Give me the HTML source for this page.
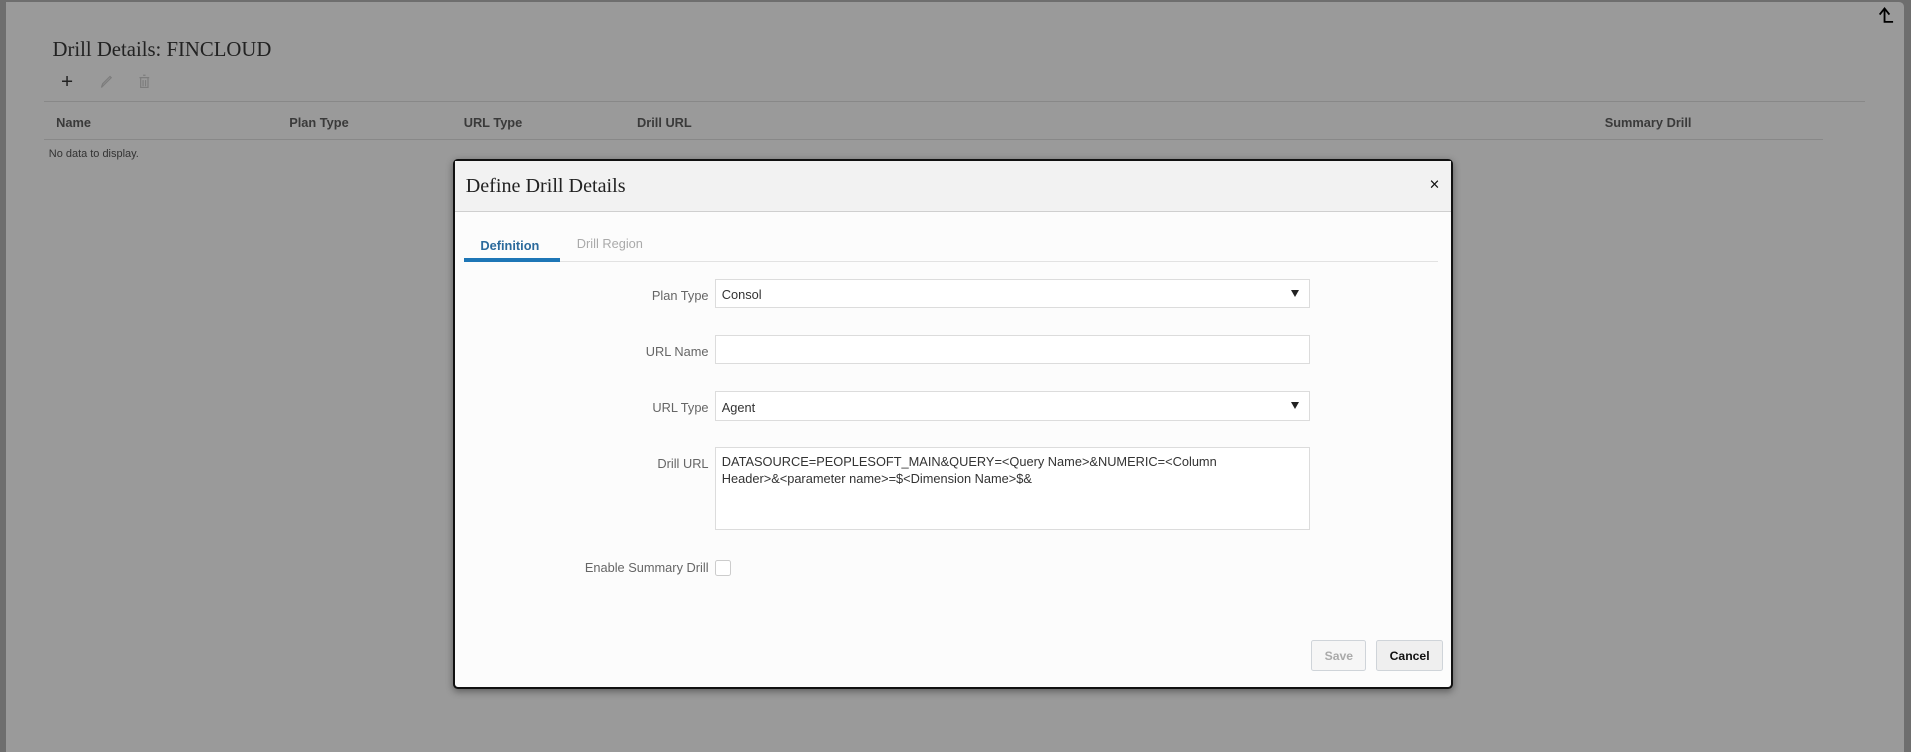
<!DOCTYPE html>
<html><head><meta charset="utf-8"><style>
html,body{margin:0;padding:0;width:1911px;height:752px;overflow:hidden;background:#6e6e6e;}
#w{zoom:1.22031;width:1566px;height:617px;position:relative;font-family:"Liberation Sans",sans-serif;}
.bg{position:absolute;left:5px;top:2px;width:1555px;height:620px;background:#9a9a9a;border-radius:0 4px 0 0;}
.a{position:absolute;white-space:nowrap;}
.hd{font-weight:bold;font-size:10.5px;color:#3a3a3a;top:94px;}
.dlg{position:absolute;left:371px;top:130px;width:816px;height:431px;background:#fcfcfc;border:2px solid #111;border-radius:4px;box-shadow:0 2px 6px rgba(0,0,0,.4);}
.dh{height:41px;background:#f2f2f2;border-bottom:1px solid #cfcfcf;position:relative;}
.lbl{position:absolute;right:608px;font-size:10.5px;color:#666;text-align:right;}
.inp{position:absolute;left:213px;width:488px;height:24px;border:1px solid #dcdcdc;background:#fff;font-size:10.5px;color:#333;box-sizing:border-box;padding:6px 5px;}
.arr{position:absolute;right:8px;top:8px;width:0;height:0;border-left:4px solid transparent;border-right:4px solid transparent;border-top:6px solid #222;}
.btn{position:absolute;top:393px;height:25px;border:1px solid #cfd4d9;border-radius:2px;font-size:10px;font-weight:bold;text-align:center;line-height:25px;box-sizing:border-box;}
</style></head><body><div id="w">
<div class="bg"></div>
<div class="a" style="left:43px;top:32px;font-family:'Liberation Serif',serif;font-size:17px;color:#222;">Drill Details: FINCLOUD</div>
<div class="a" style="left:50px;top:57px;font-size:17px;color:#222;">+</div>
<svg class="a" style="left:81px;top:61px" width="12" height="12"><path d="M2 11 L3 8 L9 2 L10 3 L4 9 Z" fill="none" stroke="#7d7d7d" stroke-width="1"/></svg>
<svg class="a" style="left:112px;top:61px" width="12" height="12"><path d="M2 3h8M5 1h2M3 3v8h6V3M5 5v5M7 5v5" fill="none" stroke="#7d7d7d" stroke-width="1"/></svg>
<div class="a" style="left:36px;top:83px;width:1492px;border-top:1px solid #888;"></div>
<div class="a hd" style="left:46px">Name</div>
<div class="a hd" style="left:237px">Plan Type</div>
<div class="a hd" style="left:380px">URL Type</div>
<div class="a hd" style="left:522px">Drill URL</div>
<div class="a hd" style="left:1315px">Summary Drill</div>
<div class="a" style="left:36px;top:114px;width:1458px;border-top:1px solid #888;"></div>
<div class="a" style="left:40px;top:121px;font-size:9px;color:#333;">No data to display.</div>
<svg class="a" style="left:1537px;top:5px" width="18" height="18"><path d="M3 7 L7 2 L11 7 M7 2 V13 H14" fill="none" stroke="#000" stroke-width="1.5"/></svg>
<div class="dlg">
 <div class="dh"><div class="a" style="left:9px;top:12px;font-family:'Liberation Serif',serif;font-size:16.5px;color:#222;">Define Drill Details</div>
 <div class="a" style="right:9px;top:12px;font-size:14px;color:#111;">×</div></div>
 <div class="a" style="left:8px;top:82px;width:798px;border-top:1px solid #e2e2e2;"></div>
 <div class="a" style="left:8px;top:80px;width:78px;height:3px;background:#1d76b6;"></div>
 <div class="a" style="left:21px;top:63px;font-size:10.5px;font-weight:bold;color:#2b6a9c;">Definition</div>
 <div class="a" style="left:100px;top:62px;font-size:10.5px;color:#aaa;">Drill Region</div>
 <div class="lbl" style="top:104px">Plan Type</div>
 <div class="inp" style="top:97px">Consol<div class="arr"></div></div>
 <div class="lbl" style="top:150px">URL Name</div>
 <div class="inp" style="top:143px"></div>
 <div class="lbl" style="top:196px">URL Type</div>
 <div class="inp" style="top:189px">Agent<div class="arr"></div></div>
 <div class="lbl" style="top:242px">Drill URL</div>
 <div class="inp" style="top:235px;height:68px;line-height:14px;white-space:nowrap;padding:4px 5px;">DATASOURCE=PEOPLESOFT_MAIN&amp;QUERY=&lt;Query Name&gt;&amp;NUMERIC=&lt;Column<br>Header&gt;&amp;&lt;parameter name&gt;=$&lt;Dimension Name&gt;$&amp;</div>
 <div class="lbl" style="top:327px">Enable Summary Drill</div>
 <div class="a" style="left:213px;top:327px;width:12px;height:12px;border:1px solid #ccc;border-radius:2px;background:#fff;"></div>
 <div class="btn" style="left:702px;width:45px;background:#f6f6f6;color:#aaa;">Save</div>
 <div class="btn" style="left:755px;width:55px;background:#efefef;color:#111;">Cancel</div>
</div>
</div></body></html>
